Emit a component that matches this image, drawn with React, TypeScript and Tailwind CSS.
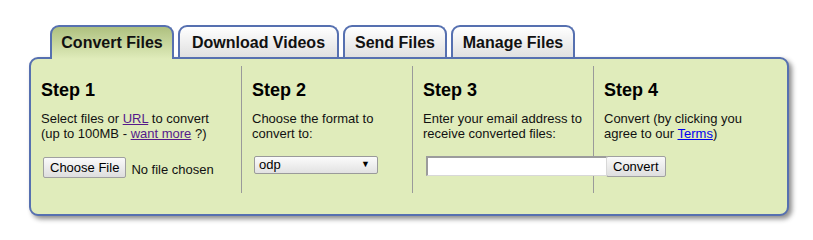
import React from 'react';

const tabs = [
  { label: 'Convert Files', width: 'w-[124px]', active: true },
  { label: 'Download Videos', width: 'w-[161px]' },
  { label: 'Send Files', width: 'w-[104px]' },
  { label: 'Manage Files', width: 'w-[124px]' },
];

const Heading = ({ children }: { children: React.ReactNode }) => (
  <h2 className="text-[18px] leading-[20px] font-bold text-black">{children}</h2>
);

const Body = ({ children }: { children: React.ReactNode }) => (
  <p className="mt-[11px] text-[13px] leading-[15px] text-[#111]">{children}</p>
);

const grayButton =
  'h-[21px] px-[6px] text-[13px] leading-[17px] text-black border border-[#a0a0a0] rounded-[2px] bg-gradient-to-b from-[#fafafa] to-[#dedede]';

export default function App() {
  return (
    <div
      className="w-[813px] h-[240px] bg-white pt-[25px] pl-[29px]"
      style={{ fontFamily: '"Liberation Sans", Arial, sans-serif' }}
    >
      {/* Tabs */}
      <div className="flex items-end gap-[4px] pl-[21px]">
        {tabs.map((tab) =>
          tab.active ? (
            <div
              key={tab.label}
              className={`${tab.width} relative z-10 -mb-[2px] h-[34px] flex items-center justify-center pb-[1px] border-2 border-b-0 border-[#5670b0] rounded-t-[9px] bg-gradient-to-b from-[#aec07f] to-[#e0ecbb] text-[16px] font-bold text-[#111]`}
            >
              {tab.label}
            </div>
          ) : (
            <div
              key={tab.label}
              className={`${tab.width} h-[32px] flex items-center justify-center pt-[2px] border-2 border-b-0 border-[#5670b0] rounded-t-[9px] bg-gradient-to-b from-white to-[#e0e0e0] text-[16px] font-bold text-[#111]`}
            >
              {tab.label}
            </div>
          )
        )}
      </div>

      {/* Panel */}
      <div className="w-[760px] h-[159px] border-2 border-[#5670b0] rounded-[9px] bg-[#e0ecbb] shadow-[3px_3px_5px_rgba(0,0,0,0.45)] pt-[7px]">
        <div className="flex h-[127px]">
          <div className="w-[210px] pl-[10px] pt-[14px]">
            <Heading>Step 1</Heading>
            <Body>
              Select files or{' '}
              <a href="#" className="underline text-[#551a8b]">
                URL
              </a>{' '}
              to convert
              <br />
              (up to 100MB -{' '}
              <a href="#" className="underline text-[#551a8b]">
                want more
              </a>{' '}
              ?)
            </Body>
            <div className="mt-[15px] ml-[2px] flex items-center">
              <button className={grayButton}>Choose File</button>
              <span className="ml-[5px] mt-[4px] text-[13px] text-[#111]">No file chosen</span>
            </div>
          </div>

          <div className="w-[171px] border-l border-[#9a9a9a] pl-[10px] pt-[14px]">
            <Heading>Step 2</Heading>
            <Body>
              Choose the format to
              <br />
              convert to:
            </Body>
            <div className="mt-[15px] ml-[2px] w-[124px] h-[18px] flex items-center justify-between pl-[4px] pr-[7px] border border-[#9a9a9a] rounded-[2px] bg-gradient-to-b from-[#fbfbfb] to-[#e2e2e2] text-[13px] text-black">
              <span>odp</span>
              <span className="text-[9px]">▼</span>
            </div>
          </div>

          <div className="w-[181px] border-l border-[#9a9a9a] pl-[10px] pt-[14px]">
            <Heading>Step 3</Heading>
            <Body>
              Enter your email address to
              <br />
              receive converted files:
            </Body>
            <input
              type="text"
              className="relative z-10 mt-[15px] ml-[3px] w-[181px] h-[20px] bg-white border border-[#d8d8d8] border-t-2 border-l-2 border-t-[#9c9c9c] border-l-[#9c9c9c] outline-none"
            />
          </div>

          <div className="flex-1 border-l border-[#9a9a9a] pl-[10px] pt-[14px]">
            <Heading>Step 4</Heading>
            <Body>
              Convert (by clicking you
              <br />
              agree to our{' '}
              <a href="#" className="underline text-[#0000ee]">
                Terms
              </a>
              )
            </Body>
            <div className="mt-[15px] ml-[2px] flex">
              <button className={grayButton}>Convert</button>
            </div>
          </div>
        </div>
      </div>
    </div>
  );
}
